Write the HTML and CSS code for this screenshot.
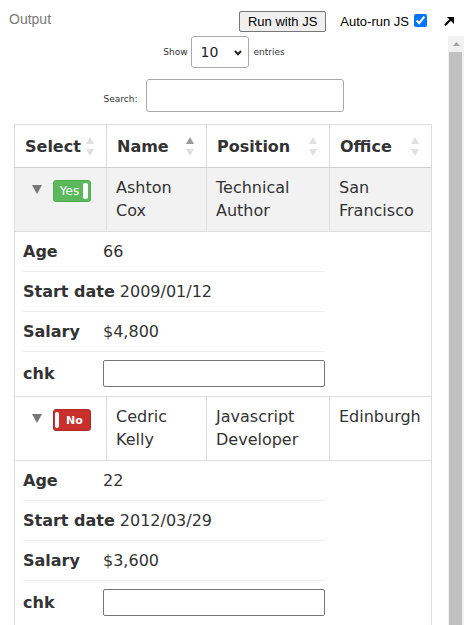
FILE: index.html
```html
<!DOCTYPE html>
<html>
<head>
<meta charset="utf-8">
<title>Output</title>
<link rel="stylesheet" href="styles.css">
</head>
<body>
<div class="topbar">
  <span class="title">Output</span>
  <div class="actions">
    <button class="run-btn" type="button">Run with JS</button>
    <label class="autorun">Auto-run JS<input class="autorun-check" type="checkbox" checked></label>
    <svg class="popout" width="10" height="9" viewBox="0 0 10 9"><path d="M1 8.2 L7.4 1.8" stroke="#000" stroke-width="2" fill="none"/><polygon points="3,0 10,0 10,7" fill="#000"/></svg>
  </div>
</div>
<div class="frame">
  <div class="content">
    <div class="length">
      <span class="small-label">Show</span>
      <div class="select-box"><span class="select-value">10</span><svg class="chev" width="8" height="6" viewBox="0 0 8 6"><path d="M1 1 L4 4.2 L7 1" stroke="#222" stroke-width="2" fill="none"/></svg></div>
      <span class="small-label">entries</span>
    </div>
    <div class="filter">
      <span class="small-label">Search:</span>
      <input class="search" type="search">
    </div>
    <table class="dt">
      <colgroup>
        <col class="c1"><col class="c2"><col class="c3"><col class="c4">
      </colgroup>
      <thead>
        <tr>
          <th><div class="th-inner"><span>Select</span><svg class="sort" width="8" height="19" viewBox="0 0 8 19"><polygon points="0,7 4,0 8,7" fill="#e0e0e0"/><polygon points="0,12 8,12 4,19" fill="#e0e0e0"/></svg></div></th>
          <th><div class="th-inner"><span>Name</span><svg class="sort" width="8" height="19" viewBox="0 0 8 19"><polygon points="0,7 4,0 8,7" fill="#9a9a9a"/><polygon points="0,12 8,12 4,19" fill="#e0e0e0"/></svg></div></th>
          <th><div class="th-inner"><span>Position</span><svg class="sort" width="8" height="19" viewBox="0 0 8 19"><polygon points="0,7 4,0 8,7" fill="#e0e0e0"/><polygon points="0,12 8,12 4,19" fill="#e0e0e0"/></svg></div></th>
          <th><div class="th-inner"><span>Office</span><svg class="sort" width="8" height="19" viewBox="0 0 8 19"><polygon points="0,7 4,0 8,7" fill="#e0e0e0"/><polygon points="0,12 8,12 4,19" fill="#e0e0e0"/></svg></div></th>
        </tr>
      </thead>
      <tbody>
        <tr class="row shaded">
          <td><div class="ctrl"><svg class="caret" width="10" height="9" viewBox="0 0 10 9"><polygon points="0,0 10,0 5,9" fill="#777"/></svg><div class="toggle on"><span class="toggle-text">Yes</span><span class="knob"></span></div></div></td>
          <td>Ashton Cox</td>
          <td>Technical Author</td>
          <td>San Francisco</td>
        </tr>
        <tr class="child">
          <td colspan="4">
            <ul class="details">
              <li><span class="dtr-title">Age</span><span class="dtr-data">66</span></li>
              <li><span class="dtr-title">Start date</span><span class="dtr-data">2009/01/12</span></li>
              <li><span class="dtr-title">Salary</span><span class="dtr-data">$4,800</span></li>
              <li><span class="dtr-title">chk</span><span class="dtr-data"><input class="chk-input" type="text"></span></li>
            </ul>
          </td>
        </tr>
        <tr class="row">
          <td><div class="ctrl"><svg class="caret" width="10" height="9" viewBox="0 0 10 9"><polygon points="0,0 10,0 5,9" fill="#777"/></svg><div class="toggle off"><span class="knob"></span><span class="toggle-text">No</span></div></div></td>
          <td>Cedric Kelly</td>
          <td>Javascript Developer</td>
          <td>Edinburgh</td>
        </tr>
        <tr class="child">
          <td colspan="4">
            <ul class="details">
              <li><span class="dtr-title">Age</span><span class="dtr-data">22</span></li>
              <li><span class="dtr-title">Start date</span><span class="dtr-data">2012/03/29</span></li>
              <li><span class="dtr-title">Salary</span><span class="dtr-data">$3,600</span></li>
              <li><span class="dtr-title">chk</span><span class="dtr-data"><input class="chk-input" type="text"></span></li>
            </ul>
          </td>
        </tr>
      </tbody>
    </table>
  </div>
  <div class="scrollbar">
    <div class="sb-up"><svg width="7" height="4" viewBox="0 0 7 4"><polygon points="0,4 3.5,0 7,4" fill="#a3a3a3"/></svg></div>
    <div class="sb-thumb"></div>
  </div>
</div>
</body>
</html>
```
FILE: styles.css
```css
html, body {
  margin: 0;
  padding: 0;
  background: #fff;
}
body {
  width: 464px;
  height: 625px;
  overflow: hidden;
  font-family: "DejaVu Sans", Verdana, sans-serif;
  color: #333;
}
.topbar {
  height: 36px;
  display: flex;
  align-items: center;
  justify-content: space-between;
  padding: 0 10px 0 9px;
  box-sizing: border-box;
  font-family: "Liberation Sans", Arial, sans-serif;
}
.title {
  font-size: 14px;
  color: #7a7a7a;
  padding-top: 2px;
}
.actions {
  display: flex;
  align-items: center;
  padding-top: 7px;
}
.run-btn {
  font-family: "Liberation Sans", Arial, sans-serif;
  font-size: 13px;
  color: #000;
  height: 21px;
  padding: 0 8px;
  background: #efefef;
  border: 1px solid #767676;
  border-radius: 2px;
  margin: 0;
}
.autorun {
  display: flex;
  align-items: center;
  font-size: 13px;
  color: #000;
  margin-left: 14px;
}
.autorun-check {
  width: 13px;
  height: 13px;
  margin: 0 0 3px 5px;
  accent-color: #0075ff;
}
.popout {
  margin-left: 17px;
  margin-bottom: 1px;
}
.frame {
  display: flex;
  height: 589px;
  overflow: hidden;
}
.content {
  width: 448px;
  flex: none;
  overflow: hidden;
}
.length {
  display: flex;
  align-items: center;
  justify-content: center;
  height: 32px;
}
.small-label {
  font-size: 9px;
  color: #333;
}
.select-box {
  width: 58px;
  height: 32px;
  box-sizing: border-box;
  border: 1px solid #aaa;
  border-radius: 3px;
  display: flex;
  align-items: center;
  justify-content: space-between;
  padding: 0 6px 0 9px;
  margin: 0 5px 0 3px;
}
.select-value {
  font-size: 14px;
  color: #222;
}
.chev {
  margin-top: 1px;
}
.filter {
  display: flex;
  align-items: center;
  justify-content: center;
  margin-top: 11px;
}
.filter .small-label {
  padding-top: 6px;
}
.search {
  width: 198px;
  height: 33px;
  box-sizing: border-box;
  border: 1px solid #aaa;
  border-radius: 3px;
  margin: 0 0 0 9px;
  padding: 0 4px;
  background: #fff;
}
.dt {
  border-collapse: collapse;
  table-layout: fixed;
  width: 417px;
  margin: 12px 0 0 14px;
  border: 1px solid #ddd;
  font-size: 16px;
  line-height: 23px;
}
.c1 { width: 92px; }
.c2 { width: 100px; }
.c3 { width: 123px; }
.c4 { width: 102px; }
.dt th, .dt td {
  border: 1px solid #ddd;
  text-align: left;
  vertical-align: top;
}
.dt th {
  padding: 10px 12px 9px 10px;
  font-weight: bold;
  border-bottom: 1px solid #cfcfcf;
}
.th-inner {
  display: flex;
  align-items: center;
  justify-content: space-between;
}
.sort {
  flex: none;
}
.dt .row td {
  padding: 8px 9px 9px 9px;
}
.dt .shaded td {
  background: #f2f2f2;
}
.ctrl {
  display: flex;
  align-items: flex-start;
  padding-left: 1px;
}
.caret {
  flex: none;
  margin: 9px 0 0 7px;
}
.toggle {
  flex: none;
  width: 38px;
  height: 22px;
  box-sizing: border-box;
  border-radius: 3px;
  display: flex;
  align-items: center;
  padding: 2px;
  margin: 4px 0 0 11px;
  color: #fff;
  line-height: 1;
}
.toggle.on {
  background: #5cb85c;
  border: 1px solid #4cae4c;
}
.toggle.off {
  background: #c9302c;
  border: 1px solid #ac2925;
  padding-left: 1px;
}
.toggle-text {
  flex: 1;
  text-align: center;
  font-size: 12px;
}
.toggle.off .toggle-text {
  font-size: 11px;
  font-weight: bold;
  padding-left: 2px;
}
.knob {
  flex: none;
  width: 5px;
  height: 16px;
  background: #fff;
  border-radius: 2px;
}
.toggle.off .knob {
  width: 4px;
}
.dt .child td {
  padding: 8px 8px 9px 8px;
  background: #fff;
}
.details {
  display: inline-block;
  list-style: none;
  margin: 0;
  padding: 0;
  vertical-align: top;
}
.details li {
  display: flex;
  align-items: center;
  padding: 8px 0;
  border-bottom: 1px solid #efefef;
}
.details li:first-child {
  padding-top: 0;
}
.details li:last-child {
  border-bottom: none;
  padding-bottom: 0;
}
.dtr-title {
  font-weight: bold;
  min-width: 75px;
  margin-right: 5px;
}
.dtr-data {
  display: flex;
}
.chk-input {
  width: 222px;
  height: 27px;
  box-sizing: border-box;
  border: 1px solid #767676;
  border-radius: 2px;
  margin: 0;
  padding: 0 3px;
  background: #fff;
}
.scrollbar {
  width: 16px;
  flex: none;
  background: #f1f1f1;
  display: flex;
  flex-direction: column;
}
.sb-up {
  height: 16px;
  display: flex;
  align-items: center;
  justify-content: center;
  padding-left: 1px;
}
.sb-thumb {
  flex: 1;
  width: 13px;
  margin-left: 1px;
  background: #c1c1c1;
}
```
